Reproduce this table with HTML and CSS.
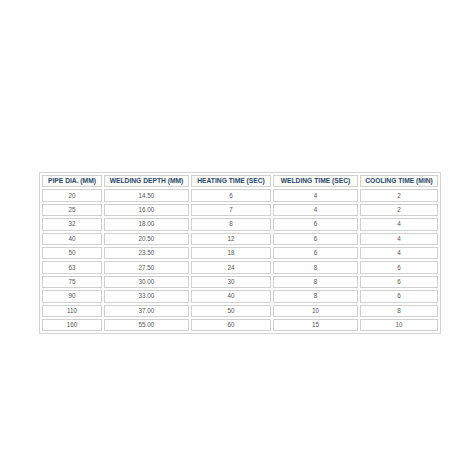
FILE: index.html
```html
<!DOCTYPE html>
<html>
<head>
<meta charset="utf-8">
<link rel="stylesheet" href="styles.css">
</head>
<body>
<div class="page">
<table class="spec">
<thead>
<tr><th>PIPE DIA. (MM)</th><th>WELDING DEPTH (MM)</th><th>HEATING TIME (SEC)</th><th>WELDING TIME (SEC)</th><th>COOLING TIME (MIN)</th></tr>
</thead>
<tbody>
<tr><td>20</td><td>14.50</td><td>6</td><td>4</td><td>2</td></tr>
<tr><td>25</td><td>16.00</td><td>7</td><td>4</td><td>2</td></tr>
<tr><td>32</td><td>18.00</td><td>8</td><td>6</td><td>4</td></tr>
<tr><td>40</td><td>20.50</td><td>12</td><td>6</td><td>4</td></tr>
<tr><td>50</td><td>23.50</td><td>18</td><td>6</td><td>4</td></tr>
<tr><td>63</td><td>27.50</td><td>24</td><td>8</td><td>6</td></tr>
<tr><td>75</td><td>30.00</td><td>30</td><td>8</td><td>6</td></tr>
<tr><td>90</td><td>33.00</td><td>40</td><td>8</td><td>6</td></tr>
<tr><td>110</td><td>37.00</td><td>50</td><td>10</td><td>8</td></tr>
<tr><td>160</td><td>55.00</td><td>60</td><td>15</td><td>10</td></tr>
</tbody>
</table>
</div>
</body>
</html>
```

FILE: styles.css
```css
html, body {
  margin: 0;
  padding: 0;
  background: #ffffff;
}
.page {
  width: 474px;
  height: 474px;
  padding: 172px 0 0 39px;
  box-sizing: border-box;
}
.spec {
  width: 400px;
  border-collapse: separate;
  border-spacing: 2px;
  border: 1px solid #d4d4d4;
  font-family: "Liberation Sans", Arial, sans-serif;
  table-layout: fixed;
}
.spec th, .spec td {
  border: 1px solid #d0d0d0;
  text-align: center;
  padding: 0;
  height: 10.4px;
  line-height: 10px;
}
.spec th {
  font-size: 6.7px;
  font-weight: bold;
  color: #26476b;
  background: #fbfbf8;
  white-space: nowrap;
}
.spec td {
  font-size: 6.3px;
  color: #555555;
}
.spec th:nth-child(1) { width: 58px; }
.spec th:nth-child(2) { width: 83px; }
.spec th:nth-child(3) { width: 78px; }
.spec th:nth-child(4) { width: 83px; }
.spec th:nth-child(5) { width: 76px; }
```
